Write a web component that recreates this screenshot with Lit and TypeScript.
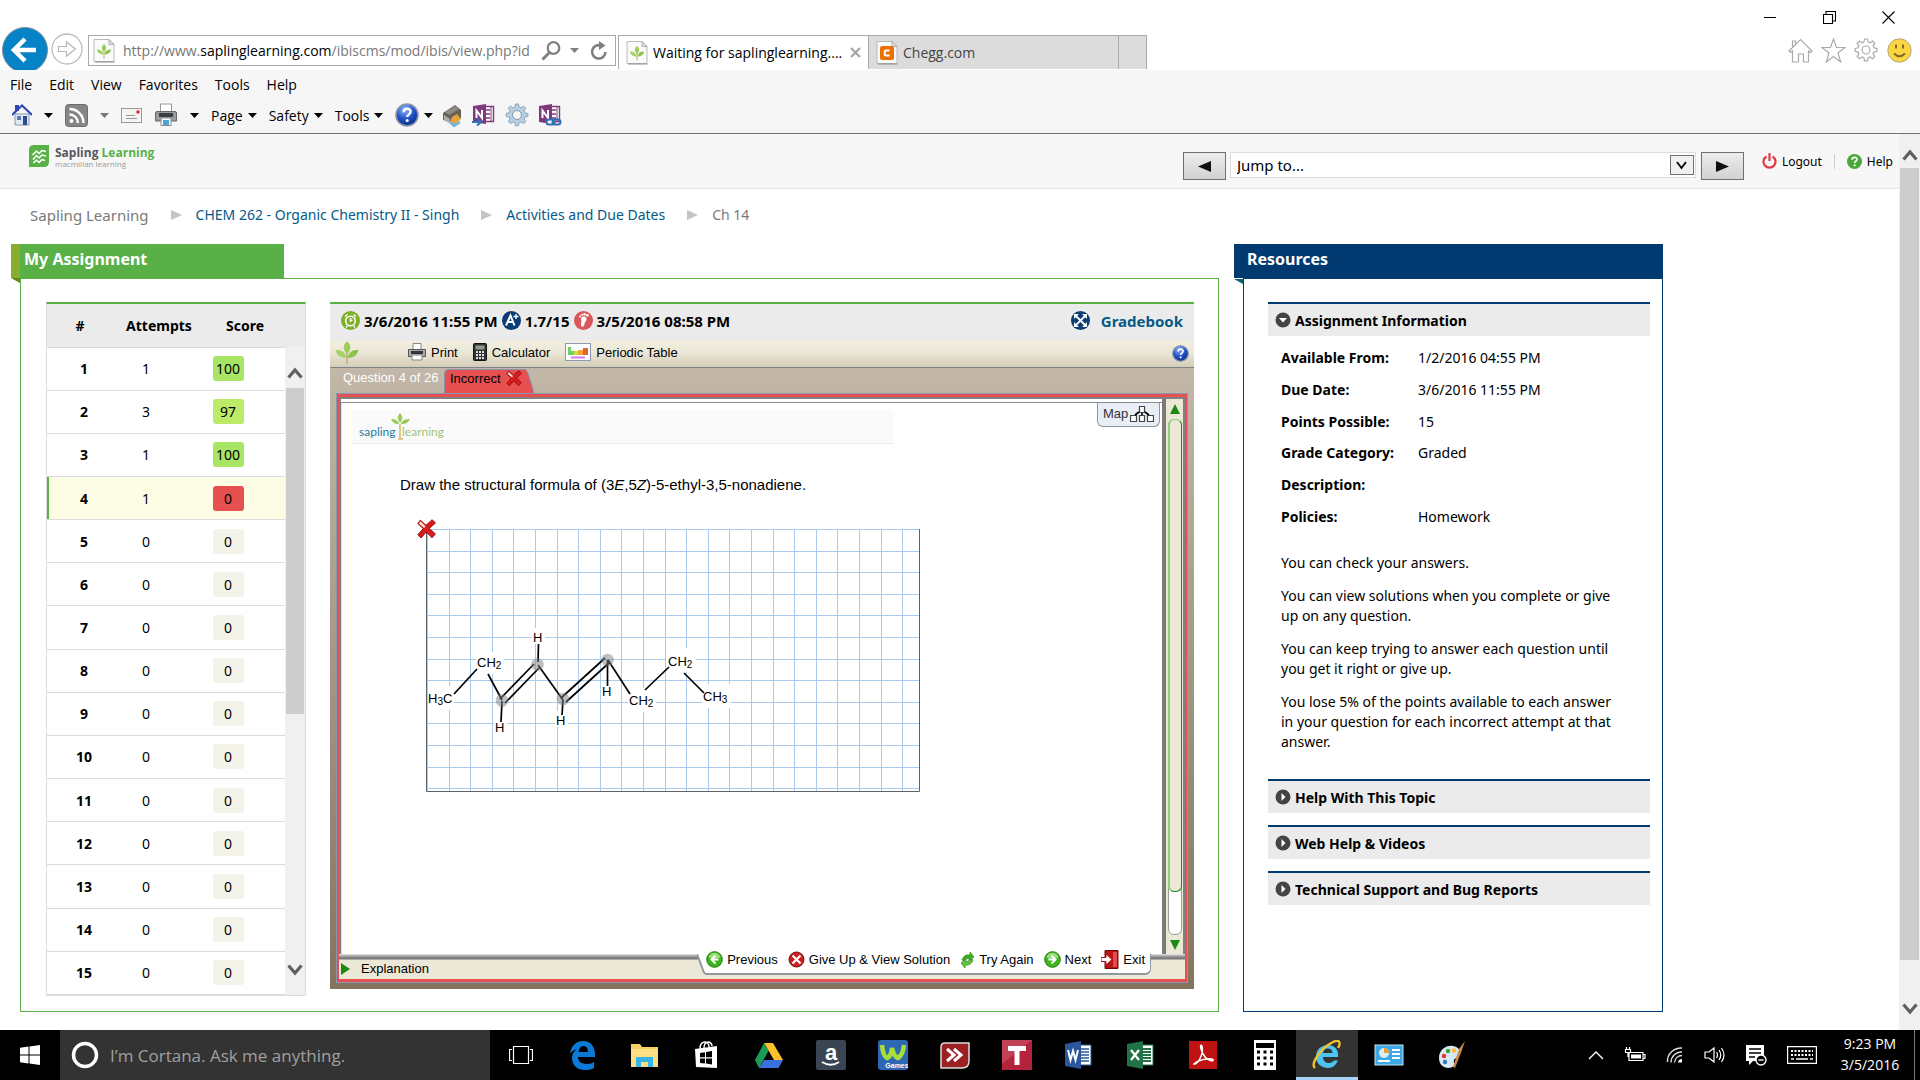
import { LitElement, html, css, svg } from "lit";
import { customElement } from "lit/decorators.js";
import { classMap } from "lit/directives/class-map.js";

interface Row { attempts: number; score: number; tone: string; }

const ROWS: Row[] = [
  { attempts: 1, score: 100, tone: "good" },
  { attempts: 3, score: 97, tone: "fair" },
  { attempts: 1, score: 100, tone: "good" },
  { attempts: 1, score: 0, tone: "bad" },
  ...Array.from({ length: 11 }, () => ({ attempts: 0, score: 0, tone: "none" })),
];

const INFO: [string, string][] = [
  ["Available From:", "1/2/2016 04:55 PM"],
  ["Due Date:", "3/6/2016 11:55 PM"],
  ["Points Possible:", "15"],
  ["Grade Category:", "Graded"],
  ["Description:", ""],
  ["Policies:", "Homework"],
];

const svgIcon = (w: number, h: number, body: unknown, box = `0 0 ${w} ${h}`) =>
  html`<svg class="ico" width=${w} height=${h} viewBox=${box} aria-hidden="true">${body}</svg>`;

const caret = (color = "#000") => svgIcon(9, 5, svg`<path d="M0 0h9l-4.5 5z" fill=${color} />`);

const leaf = svg`<path d="M12 21V9" stroke="#c9b478" stroke-width="1.4"/>
  <path d="M12 3c3.500 3 3.500 6.500 0 10c-3.500-3.500-3.500-7 0-10z" fill="#9bcc5b"/>
  <path d="M11.500 16c-5 .5-7.500-2-8.500-6c4.500-.5 7.500 1.500 8.500 6z" fill="#a6d267"/>
  <path d="M12.500 16c5 .5 7.500-2 8.500-6c-4.500-.5-7.500 1.500-8.500 6z" fill="#8ec24e"/>`;

const sheet = svg`<path d="M1 .5h15l5 5v17h-20z" fill="#fafafa" stroke="#b9b9b9"/>
  <path d="M16 .5v5h5z" fill="#e2e2e2" stroke="#a0a0a0" stroke-width=".8"/><path d="M2 23h19.500" stroke="#8d8d8d"/>`;

const favSapling = svgIcon(22, 24, svg`${sheet}<g transform="translate(1.400 2.600) scale(.8)">${leaf}</g>`);
const favChegg = svgIcon(22, 24, svg`${sheet}<rect x="4" y="5" width="14" height="14" rx="2" fill="#eb7100"/>
  <path d="M13.600 9.500h-3.600q-1.200 0-1.200 1.200v2.600q0 1.200 1.200 1.200h3.600" fill="none" stroke="#fff" stroke-width="2.200"/>`);

const redX = (s: number) => svgIcon(s, s, svg`
  <path d="M3 1l5 4.600L13.600.6L16.500 3.600L11 8.400l5.500 5L13.400 16.800L8.300 11.600L3.600 17L.8 14L5.600 8.600L.6 4z" fill="#d81b1b" stroke="#8d0c0c" stroke-width=".8"/>
  <path d="M3 2l4.600 4.400L6.400 8L1.600 4z" fill="#ffd9d5"/>`, "0 0 17 17");

const printer = svgIcon(24, 24, svg`
  <path d="M6.500 1h11v9h-11z" fill="#fff" stroke="#999"/>
  <path d="M1.500 10q0-1.500 1.500-1.500h18q1.500 0 1.500 1.500v8h-21z" fill="#9a9da0" stroke="#666"/>
  <path d="M5 10h14v4H5z" fill="#3c3f42"/>
  <path d="M7 15h10v7.500H7z" fill="#fff" stroke="#888"/><path d="M9 17h6v5H9z" fill="#4aa8d8"/>`);

const orb = (s: number, id: string) => svgIcon(s, s, svg`
  <defs><radialGradient id=${id} cx=".4" cy=".25" r=".9"><stop offset="0" stop-color="#8fb4ff"/><stop offset=".5" stop-color="#1d4fc4"/><stop offset="1" stop-color="#0a2173"/></radialGradient></defs>
  <circle cx="12" cy="12" r="11" fill="url(#${id})" stroke="#8c96a8" stroke-width="1.600"/>
  <path d="M8.600 9.200c0-4.600 7-4.600 7-.4c0 2.600-3.400 2.600-3.400 5.200" fill="none" stroke="#fff" stroke-width="2.400"/><circle cx="12.200" cy="17.400" r="1.500" fill="#fff"/>`, "0 0 24 24");

const oneNote = (extra: unknown) => svgIcon(24, 24, svg`
  <path d="M12 3.500h9.500v15H12z" fill="#fff" stroke="#80397b" stroke-width="1.400"/>
  <path d="M14 7h4M14 11h4M14 15h4" stroke="#80397b" stroke-width="1.600"/><path d="M19 4v14" stroke="#80397b"/>
  <path d="M1 3l13-2v20L1 19z" fill="#80397b"/><path d="M4.500 15V7.500l5.500 7.500V7" fill="none" stroke="#fff" stroke-width="2"/>${extra}`);

const gearPath = "M10.500 1h3l.6 3 2 .8 2.500-1.700 2.200 2.200-1.700 2.500.8 2 3 .6v3l-3 .6-.8 2 1.700 2.500-2.200 2.200-2.500-1.700-2 .8-.6 3h-3l-.6-3-2-.8-2.500 1.700-2.200-2.200 1.700-2.500-.8-2-3-.6v-3l3-.6.8-2-1.700-2.500 2.200-2.200 2.500 1.700 2-.8z";

const bullet = (open: boolean) => svgIcon(16, 16, svg`<circle cx="8" cy="8" r="7.500" fill="#444"/>
  ${open ? svg`<path d="M4 6h8l-4 4.500z" fill="#fff"/>` : svg`<path d="M6.500 4v8l4-4z" fill="#fff"/>`}`);

const chevUp = svgIcon(16, 14, svg`<path d="M1.500 11.500L8 4l6.500 7.500" fill="none" stroke="#606060" stroke-width="3.200"/>`);
const chevDown = svgIcon(16, 14, svg`<path d="M1.500 2.500L8 10l6.500-7.500" fill="none" stroke="#606060" stroke-width="3.200"/>`);

const greenBall = (back: boolean) => svgIcon(17, 17, svg`<circle cx="8.500" cy="8.500" r="7.800" fill="#3fb51d" stroke="#1f7d0b"/>
  <path d="M2.500 6.500a6.200 6.200 0 0 1 12 0q-6 2.500-12 0z" fill="#b9ef9c" opacity=".7"/>
  <path d=${back ? "M9.500 4.500l-4 4l4 4M5.500 8.500h7" : "M7.500 4.500l4 4l-4 4M11.500 8.500h-7"} fill="none" stroke="#fff" stroke-width="2"/>`);

@customElement("molecule-grid")
class MoleculeGrid extends LitElement {
  static styles = css`
    :host { display: block; }
    svg { display: block; }
    text { font: 13px "Liberation Sans", Arial, sans-serif; fill: #000; }
    .sub { font-size: 10px; }
  `;
  render() {
    const xs = Array.from({ length: 23 }, (_, i) => Math.round(17 + i * 21.6) + 0.5);
    const ys = Array.from({ length: 13 }, (_, i) => Math.round(19 + i * 21.6) + 0.5);
    const bonds: number[][] = [
      [44, 184, 67, 159], [78, 164, 92, 190], [92, 191, 91, 212],
      [90, 189, 124, 154], [95, 193, 129, 158], [128, 152, 128.5, 134],
      [128, 155, 153, 190], [153, 190, 152, 205],
      [151, 188, 195, 148], [156, 192, 200, 152],
      [197.500, 150, 197.500, 176], [198, 150, 220, 184],
      [235, 180, 259, 157], [274, 163, 294, 183],
    ];
    const halos = [[18, 176, 26, 24], [66, 142, 28, 22], [218, 178, 28, 24], [256, 138, 30, 24], [292, 174, 28, 24], [122, 118, 13, 16], [84, 208, 13, 16], [145, 201, 13, 16], [191, 173, 13, 16]];
    return html`<svg width="520" height="290" viewBox="0 0 520 290" role="img" aria-label="Structural formula">
      <path d=${xs.map((x) => `M${x} 19V281`).join("")} stroke="#a9cbee" />
      <path d=${ys.map((y) => `M17 ${y}H509`).join("")} stroke="#a9cbee" />
      <path d="M16.500 19V281.500H509.500V19" fill="none" stroke="#5d6468" />
      ${halos.map((h) => svg`<rect x=${h[0]} y=${h[1]} width=${h[2]} height=${h[3]} fill="#fff"/>`)}
      ${bonds.map((b) => svg`<line x1=${b[0]} y1=${b[1]} x2=${b[2]} y2=${b[3]} stroke="#000" stroke-width="1.700"/>`)}
      ${[[92, 190.500], [127.500, 154.500], [153, 189], [197.500, 150]].map((c) => svg`<circle cx=${c[0]} cy=${c[1]} r="6.300" fill="#808080" opacity=".5"/>`)}
      <text x="18" y="193">H<tspan class="sub" dy="2">3</tspan><tspan dy="-2">C</tspan></text>
      <text x="67" y="157">CH<tspan class="sub" dy="2">2</tspan></text>
      <text x="219" y="195">CH<tspan class="sub" dy="2">2</tspan></text>
      <text x="258" y="156">CH<tspan class="sub" dy="2">2</tspan></text>
      <text x="293" y="191">CH<tspan class="sub" dy="2">3</tspan></text>
      <text x="123" y="132">H</text><text x="85" y="222">H</text>
      <text x="146" y="215">H</text><text x="192" y="186">H</text>
      <svg x="7" y="9" width="19" height="19" viewBox="0 0 17 17">
        <path d="M3 1l5 4.600L13.600.6L16.500 3.600L11 8.400l5.500 5L13.400 16.800L8.300 11.600L3.600 17L.8 14L5.600 8.600L.6 4z" fill="#d81b1b" stroke="#8d0c0c" stroke-width=".8"/>
        <path d="M3 2l4.600 4.400L6.400 8L1.600 4z" fill="#ffe4e0"/>
      </svg>
    </svg>`;
  }
}

@customElement("task-bar")
class TaskBar extends LitElement {
  static styles = css`
    :host { display: flex; height: 50px; background: #000; color: #fff; font-family: "Open Sans", "Noto Sans", sans-serif; }
    button { border: 0; background: none; padding: 0; margin: 0; color: inherit; display: flex; align-items: center; justify-content: center; }
    svg { display: block; }
    .start { width: 60px; }
    .search { width: 430px; background: #333; display: flex; align-items: center; padding-left: 11px; gap: 11px; box-sizing: border-box; }
    .search input { flex: 1; min-width: 0; border: 0; background: none; font: 17px "Open Sans", sans-serif; color: #a0a0a0; padding: 0; }
    .search input::placeholder { color: #a0a0a0; opacity: 1; }
    .apps { display: flex; flex: 1; }
    .apps button { width: 62px; border-bottom: 3px solid transparent; border-top: 3px solid transparent; }
    .apps .active { background: #333; border-bottom-color: #a9d3fa; border-top-color: #333; }
    .tray { display: flex; align-items: center; gap: 20px; }
    .clock { font-size: 14px; line-height: 21px; text-align: center; width: 66px; padding-bottom: 2px; }
    .edge { width: 5px; border-left: 1px solid #777; align-self: stretch; margin-left: -9px; }
  `;
  render() {
    const apps = [
      ["Edge", svg`<path d="M2 14C3 5 9 1 15 1c8 0 12 6 12 14v2H10c0 5 4 7 9 7 3 0 5-.7 7-2v6c-2 1.400-5 2-9 2C8 30 4 24 4 18c0-4 2-7 5-9-4 1-6 3-7 5zM10.500 12h9.500c0-4-2-6-4.500-6s-4.500 2-5 6z" fill="#0a7ad6"/>`],
      ["File Explorer", svg`<path d="M1 4h9l2 3h16v20H1z" fill="#f5cf63"/><path d="M1 9h27v18H1z" fill="#fcdf83"/><path d="M6 17h17v10h-5v-5h-7v5H6z" fill="#35b5e8"/>`],
      ["Store", svg`<path d="M3 9l22-3v22L4 27z" fill="#fff"/><path d="M8 9c0-9 9-9 9-2M12 8c0-8 8-7 8-2" fill="none" stroke="#fff" stroke-width="1.500"/><path d="M8 13l5-.7v5H8zM14 12l6-.9v6.200h-6zM8 18.400h5v5L8 23zM14 18.400h6v6l-6-.8z" fill="#000"/>`],
      ["Google Drive", svg`<path d="M10 3h9l10 17h-9z" fill="#fbc02d"/><path d="M10 3l4.500 8L5 28 1 20z" fill="#1a9c55"/><path d="M10 20h19l-4.500 8H5z" fill="#3a6fe0"/>`],
      ["Amazon", svg`<rect x="0" y="0" width="30" height="30" rx="2" fill="#3a4553"/><text x="15" y="20" text-anchor="middle" fill="#fff" font-size="22" font-weight="700">a</text><path d="M6 22q9 5.500 17 0" fill="none" stroke="#fff" stroke-width="1.800"/>`],
      ["Games", svg`<rect x="0" y="0" width="30" height="30" rx="3" fill="#2d68b4"/><path d="M4 5q1 11 5 13q4-1 5-10q2 9 6 10q5-3 6-13" fill="none" stroke="#a9dd3a" stroke-width="4.500"/><text x="19" y="28" text-anchor="middle" fill="#fff" font-size="7" font-weight="700">Games</text>`],
      ["Remote", svg`<path d="M5 3h24v18q0 7-7 7H1V7q0-4 4-4z" fill="#9a2024" stroke="#ddd" stroke-width="1.500"/><path d="M7 9l7 6-7 6M14 9l7 6-7 6" fill="none" stroke="#fff" stroke-width="3"/>`],
      ["T", svg`<rect x="0" y="0" width="30" height="30" fill="#b3243c"/><path d="M0 0h30L0 24z" fill="#d06070" opacity=".5"/><path d="M6 6h18v5h-6.500v14h-5V11H6z" fill="#fff"/>`],
      ["Word", svg`<path d="M14 5h13v20H14z" fill="#fff" stroke="#2b579a"/><path d="M17 9h8M17 12h8M17 15h8M17 18h8M17 21h8" stroke="#2b579a" stroke-width="1.500"/><path d="M1 4l16-3v28L1 26z" fill="#2b579a"/><path d="M4 10l2.500 10L9 11l2.500 9L14 10" fill="none" stroke="#fff" stroke-width="2"/>`],
      ["Excel", svg`<path d="M14 5h13v20H14z" fill="#fff" stroke="#217346"/><path d="M17 9h8M17 12h8M17 15h8M17 18h8M17 21h8" stroke="#217346" stroke-width="2"/><path d="M1 4l16-3v28L1 26z" fill="#217346"/><path d="M5 10l8 10M13 10L5 20" fill="none" stroke="#fff" stroke-width="2.200"/>`],
      ["Acrobat", svg`<rect x="1" y="1" width="28" height="28" fill="#c11212"/><path d="M6 24c3 1 10-9 8-18c-1-2-2 0-1 3c2 7 6 11 11 12c3-1 0-3-5-2c-5 .5-10 2-13 5z" fill="none" stroke="#fff" stroke-width="1.500"/>`],
      ["Calculator", svg`<path d="M4 0h22v30H4z" fill="#fff"/><path d="M6 3h18v5H6z" fill="#000"/><path d="M7 12h3M13.500 12h3M20 12h3M7 18h3M13.500 18h3M20 18h3M7 24h3M13.500 24h3M20 24h3" stroke="#000" stroke-width="3"/>`],
      ["Internet Explorer", svg`<path d="M26 17H11c0 4 3 6 6 6 2 0 4-1 5-2.500h4C24 25 21 28 16 28 9 28 4 23 4 16.500S9 5 16 5s11 5 10 12zM11 13h9.500c0-3-2-4.500-4.700-4.500S11.500 10 11 13z" fill="#4cc3f1"/><path d="M3 28C-2 24 9 8 21 2c7-3 8 1 5 6" fill="none" stroke="#f2c12e" stroke-width="2.400"/>`],
      ["Control Panel", svg`<rect x="1" y="5" width="28" height="20" fill="#3fa9e6" stroke="#bfe3f8"/><circle cx="10" cy="13" r="5" fill="#d8effb"/><path d="M10 13V8a5 5 0 0 1 5 5z" fill="#f59b2e"/><path d="M18 10h8M18 14h8M18 18h8M4 21h12" stroke="#fff" stroke-width="1.800"/>`],
      ["Paint", svg`<path d="M3 18C3 10 10 5 17 6c6 1 8 5 6 9-1 3-4 3-5 5-1 3 2 4 0 6-5 4-15 2-15-8z" fill="#d7e7f3"/><circle cx="8" cy="16" r="2.200" fill="#e33"/><circle cx="12" cy="11" r="2.200" fill="#3a3"/><circle cx="18" cy="10.500" r="2.200" fill="#fb3"/><circle cx="9" cy="22" r="2.200" fill="#37c"/><path d="M29 1l-3 9-7 18-2-1 6-18z" fill="#c98a45"/>`],
    ] as const;
    return html`
      <button class="start" aria-label="Start"><svg width="20" height="20" viewBox="0 0 20 20"><path d="M0 2.800l8.500-1.200v8H0zM9.500 1.400L20 0v9.600H9.500zM0 10.500h8.500v8L0 17.300zM9.500 10.500H20V20L9.500 18.600z" fill="#fff"/></svg></button>
      <label class="search"><svg width="28" height="28" viewBox="0 0 28 28" aria-hidden="true"><circle cx="14" cy="14" r="11.500" fill="none" stroke="#fff" stroke-width="3.500"/></svg>
        <input aria-label="Cortana search" placeholder="I’m Cortana. Ask me anything." /></label>
      <div class="apps">
        <button class="view" aria-label="Task view"><svg width="24" height="20" viewBox="0 0 24 20"><path d="M4.500 1.500h15v17h-15zM3 4.500H.5v11H3M21 4.500h2.500v11H21" fill="none" stroke="#fff" stroke-width="1.200"/></svg></button>
        ${apps.map(([name, art]) => html`<button aria-label=${name} class=${classMap({ active: name === "Internet Explorer" })}><svg width="30" height="30" viewBox="0 0 30 30">${art}</svg></button>`)}
      </div>
      <div class="tray">
        <svg width="16" height="10" viewBox="0 0 16 10"><path d="M1 9l7-7 7 7" fill="none" stroke="#fff" stroke-width="1.400"/></svg>
        <svg width="22" height="18" viewBox="0 0 22 18"><path d="M5 6.500h14v8H5zM19 8.500h2v4h-2M2.500 1v3M5.500 1v3M1.500 3.500h5v3h-5zM4 6v5" fill="none" stroke="#fff" stroke-width="1.200"/><path d="M7 8.500h10v4H7z" fill="#fff"/></svg>
        <svg width="18" height="18" viewBox="0 0 18 18"><path d="M1.500 16C1 8 8 1.500 16 2M5 16.500C5 10.500 10 5.500 16 6M8.500 16.500C9 12.500 12 9.500 16 9.500" fill="none" stroke="#ddd" stroke-width="1.400"/><path d="M12 16.500q.5-3.500 4-3.500v3.500z" fill="#fff"/></svg>
        <svg width="21" height="18" viewBox="0 0 21 18"><path d="M1 6h4l5-4v14l-5-4H1z" fill="none" stroke="#fff" stroke-width="1.200"/><path d="M12.500 6q2 3 0 6M15 4q3.500 5 0 10M17.500 2q5 7 0 14" fill="none" stroke="#fff" stroke-width="1.200"/></svg>
        <svg width="22" height="22" viewBox="0 0 22 22"><path d="M1 1h18v16H8l-4 4v-4H1z" fill="#fff"/><path d="M4 5h12M4 9h12M4 13h6" stroke="#000" stroke-width="1.500"/><circle cx="16" cy="16" r="5" fill="#000" stroke="#fff" stroke-width="1.400"/><path d="M13.500 16h5" stroke="#fff" stroke-width="1.400"/></svg>
        <svg width="30" height="18" viewBox="0 0 30 18"><path d="M.6.600h28.800v16.800H.6z" fill="none" stroke="#fff" stroke-width="1.200"/><path d="M4 5h22M4 9h22" stroke="#fff" stroke-width="2" stroke-dasharray="2 1.500"/><path d="M4 13h3M9 13h12M23 13h3" stroke="#fff" stroke-width="1.600"/></svg>
        <div class="clock">9:23 PM<br />3/5/2016</div>
        <div class="edge"></div>
      </div>`;
  }
}

@customElement("app-root")
class AppRoot extends LitElement {
  static styles = css`
    :host { display: flex; flex-direction: column; min-height: 100vh; background: #fff; color: #000; font: 14px "Noto Sans", "Open Sans", sans-serif; }
    * { box-sizing: border-box; }
    button { font: inherit; color: inherit; background: none; border: 0; padding: 0; margin: 0; }
    a { color: inherit; text-decoration: none; }
    .ico { display: block; flex: none; }

    .chrome { font-family: "Open Sans", "Noto Sans", sans-serif; font-size: 14px; }
    .top { display: flex; height: 70px; padding: 0 8px 0 2px; overflow: hidden; }
    .nav { display: flex; align-items: flex-start; }
    .back { margin-top: 27px; height: 46px; }
    .fwd { margin: 33px 4px 0 3px; }
    .address { width: 528px; height: 31px; margin: 35px 2px 0 1px; border: 1px solid #aaa; display: flex; align-items: center; padding: 0 7px 0 4px; }
    .url { flex: 1; white-space: nowrap; margin: 0 6px 0 8px; color: #777; }
    .url b { font-weight: 400; color: #000; }
    .address .caret { margin: 0 11px 0 9px; }
    .tabs { display: flex; margin-top: 35px; height: 34px; border: 1px solid #aaa; border-bottom: 0; }
    .tab { width: 250px; display: flex; align-items: center; gap: 5px; padding: 0 7px; border-right: 1px solid #aaa; white-space: nowrap; }
    .tab .lbl { flex: 1; }
    .tab.off, .newtab { background: #dcdcdc; color: #444; }
    .newtab { width: 27px; }
    .win { margin-left: auto; display: flex; flex-direction: column; align-items: flex-end; }
    .winbtns { display: flex; gap: 46px; padding: 11px 17px 0 0; height: 38px; align-items: flex-start; }
    .tools { display: flex; gap: 8px; }
    .bars { background: #f6f6f6; height: 64px; border-bottom: 1px solid #747474; }
    .menu { display: flex; gap: 17px; padding: 0 10px; height: 28px; align-items: center; }
    .cmd { display: flex; align-items: center; padding: 0 12px; height: 34px; gap: 12px; }
    .cmd .drop { display: flex; align-items: center; gap: 5px; }
    .cmd .extras { display: flex; align-items: center; gap: 9px; }

    .body { flex: 1; display: flex; }
    .page { flex: 1; min-width: 0; display: flex; flex-direction: column; }
    .scroll { width: 21px; background: #f0f0f0; display: flex; flex-direction: column; align-items: center; flex: none; }
    .scroll .thumb { background: #cdcdcd; align-self: stretch; margin: 0 1px; }
    .page-scroll { padding: 14px 0; gap: 6px; }
    .page-scroll .thumb { flex: 1; margin-bottom: 36px; }

    .head { background: #f7f7f7; height: 55px; border-bottom: 1px solid #e3e3e3; display: flex; justify-content: space-between; padding: 11px 6px 0 29px; }
    .brand { display: flex; gap: 6px; height: 24px; }
    .brand .word { font: 700 12px/15px "Open Sans", sans-serif; color: #57585a; }
    .brand em { font-style: normal; color: #57b147; }
    .brand small { display: block; font: 8px/8px "Open Sans", sans-serif; color: #999; }
    .jump { display: flex; align-items: flex-start; padding-top: 7px; }
    .step { width: 43px; height: 28px; border: 1px solid #707070; background: linear-gradient(#ececec, #d2d2d2); display: flex; align-items: center; justify-content: center; }
    .pick { position: relative; width: 466px; margin: 0 5px 0 4px; }
    .pick select { appearance: none; width: 100%; height: 26px; border: 1px solid #ddd; border-radius: 0; background: #fff; font: 15px "Noto Sans", sans-serif; padding: 0 6px; color: #000; }
    .pick .arrow { position: absolute; right: 2px; top: 3px; width: 24px; height: 20px; border: 1px solid #707070; background: #f0f0f0; display: flex; align-items: center; justify-content: center; pointer-events: none; }
    .links { display: flex; align-items: center; height: 18px; margin-left: 18px; gap: 6px; font-size: 12px; }
    .links a { display: flex; align-items: center; gap: 5px; }
    .bar { width: 1px; height: 15px; background: #ccc; margin: 0 6px; }

    .crumbs { display: flex; align-items: center; height: 55px; padding: 0 30px 4px; gap: 14px; color: #7a7a7a; }
    .crumbs a { color: #045a87; margin-right: 8px; }
    .crumbs .home { font-size: 15px; color: #7a7a7a; }

    .cols { flex: 1; display: grid; grid-template-columns: minmax(0, 1fr) 429px; column-gap: 15px; padding: 0 236px 18px 11px; }
    .panel { display: flex; flex-direction: column; }
    .title { margin: 0; height: 34px; font-size: 16px; font-weight: 700; line-height: 30px; color: #fff; }
    .mine .title { width: 273px; background: #58b047; border-left: 9px solid #89ae2f; padding-left: 4px; }
    .res .title { background: #003a70; padding-left: 13px; }
    .box { flex: 1; position: relative; margin-left: 9px; border: 1px solid #58b047; }
    .res .box { border-color: #003a70; }
    .mine .box { border-top: 0; box-shadow: inset 0 1px #58b047; }
    .fold { position: absolute; left: -10px; top: 0; width: 9px; height: 5px; background: #64861c; clip-path: polygon(0 0, 100% 0, 100% 100%); }
    .res .fold { background: #0a6272; }
    .mine .box { display: flex; gap: 24px; padding: 24px 24px 15px 25px; align-items: flex-start; }

    .list { width: 260px; flex: none; display: flex; border: 1px solid #dcdcdc; border-top: 2px solid #58b047; background: #ebebeb; align-self: stretch; }
    table { border-collapse: collapse; border-spacing: 0; }
    .grades { width: 238px; table-layout: fixed; background: #fff; height: 691px; }
    .grades th, .grades td { padding: 0; text-align: center; border-bottom: 1px solid #dcdcdc; }
    .grades thead th { background: #ebebeb; height: 43px; }
    .c1 { width: 66px; } .c2 { width: 92px; }
    .grades tbody th { padding-left: 8px; }
    .grades .att { padding-right: 26px; }
    .grades .sc { padding-right: 34px; }
    .badge { display: block; width: 31px; height: 25px; line-height: 25px; margin: 0 auto; border-radius: 3px; background: #f3f3ea; }
    .badge.good { background: #a9e565; } .badge.fair { background: #bcea69; } .badge.bad { background: #e65050; }
    .grades .current { background: #fdfce5; box-shadow: inset 2px 0 #58b047; }
    .list .scroll { width: 20px; flex: 1; margin-top: 43px; padding: 19px 0 18px; gap: 8px; }
    .list .thumb { height: 326px; margin-bottom: auto; }

    .module { flex: 1; min-width: 0; display: flex; flex-direction: column; border-top: 2px solid #58b047; align-self: stretch; margin-bottom: 7px; font-family: "Liberation Sans", Arial, sans-serif; font-size: 13px; }
    .status { height: 37px; background: #ebebeb; display: flex; align-items: center; gap: 4px; padding: 0 11px 4px; font: 700 15px "Noto Sans", sans-serif; }
    .status .right { margin-left: auto; display: flex; gap: 11px; align-items: center; color: #045a87; }
    .kit { height: 27px; background: linear-gradient(#f2efe0, #ebe7d6 45%, #d3cdb8); border-bottom: 1px solid #7c8488; display: flex; align-items: center; padding: 0 5px 4px 4px; }
    .kit button { display: flex; align-items: center; gap: 5px; margin-right: 15px; }
    .kit .first { margin-left: 48px; }
    .kit .ask { margin: 2px 0 0 auto; }
    .stage { flex: 1; display: flex; flex-direction: column; padding: 1px 6px 6px; background: linear-gradient(#c2b7a8, #84745f); }
    .qtabs { display: flex; height: 24px; align-items: stretch; }
    .count { color: #fff; line-height: 18px; padding-left: 7px; width: 108px; white-space: nowrap; }
    .wrong { display: flex; gap: 5px; height: 24px; padding: 1px 0 0 6px; background: #e65050; border-radius: 5px 0 0; line-height: 18px; width: 80px; box-shadow: inset 1px 1px #8a93b0; }
    .frame { flex: 1; display: flex; flex-direction: column; border: 1px solid #8498b4; background: #e65050; padding: 3px 2px; }
    .view { flex: 1; display: flex; border: 2px solid #818181; border-bottom: 0; background: #fff; }
    .work { flex: 1; min-width: 0; margin-top: 3px; border-top: 1px solid #868c90; box-shadow: inset 1px 0 #ddd; position: relative; }
    .map { position: absolute; right: 2px; top: 0; width: 63px; height: 24px; border: 1px solid #8d979e; border-top: 0; border-radius: 0 0 6px 6px; background: #e9edf6; display: flex; gap: 2px; padding: 0 0 2px 5px; align-items: center; color: #333; }
    .banner { width: 541px; height: 34px; background: #fafafa; border-bottom: 1px solid #ececec; margin: 7px 0 0 11px; }
    .prompt { font-size: 15px; line-height: 20px; margin: 31px 0 15px 59px; }
    molecule-grid { margin-left: 69px; }
    .rail { width: 21px; display: flex; flex-direction: column; align-items: center; background: #ebe8d8; border-left: 4px solid #7b7b7b; padding: 5px 0 4px; gap: 5px; }
    .tube { flex: 1; width: 14px; border: 1px solid #99a09a; border-radius: 6px; background: #fff; }
    .tube .grip { height: 92%; margin: -1px; border: 1px solid #1c8a12; border-left: 2px solid #8fd07c; border-top-color: #8fd07c; border-radius: 6px; background: #ebe8d8; }
    .foot { display: flex; align-items: flex-start; justify-content: space-between; height: 25px; background: linear-gradient(#e8e8e8, #8a8a8a 3px, #747474 5px, #ebe8d8 6px); }
    .explain { display: flex; align-items: center; gap: 10px; padding: 5px 0 0 2px; height: 24px; }
    .actions { display: flex; margin-right: 34px; }
    .slant { margin-right: -9px; }
    .acts { display: flex; align-items: center; gap: 10px; height: 21px; background: #fff; border-bottom: 2px solid #8f999d; border-right: 1px solid #8f999d; border-radius: 0 0 6px 0; padding: 0 5px 8px 0; }
    .acts button { display: flex; align-items: center; gap: 4px; white-space: nowrap; }

    .res .box { padding: 23px 12px 0 24px; }
    .acc { width: 100%; height: 34px; border-top: 2px solid #003a70; background: #ebebeb; display: flex; align-items: center; gap: 4px; padding: 0 7px; font-weight: 700; margin-bottom: 12px; }
    .info { margin: -6px 0 0 13px; height: 190px; }
    .info th { text-align: left; width: 137px; padding: 0; }
    .info td { padding: 0; }
    .policy { margin: 21px 28px 27px 13px; line-height: 20px; }
    .policy p { margin: 0 0 13px; }
  `;

  private accordion(text: string, open = false) {
    return html`<button class="acc" aria-expanded=${open}>${bullet(open)}<span>${text}</span></button>`;
  }

  private chrome() {
    const grey = "#808080";
    const menuBtn = (t: string) => html`<button class="drop">${t}${caret()}</button>`;
    return html`<header class="chrome">
      <div class="top">
        <div class="nav">
          <button class="back" aria-label="Back">${svgIcon(46, 46, svg`<circle cx="23" cy="23" r="22.500" fill="#0683c6" stroke="#7d8d96"/><path d="M23 12L12 23l11 11M12.500 23H34" fill="none" stroke="#fff" stroke-width="4.500"/>`)}</button>
          <button class="fwd" aria-label="Forward">${svgIcon(32, 32, svg`<circle cx="16" cy="16" r="15" fill="#fff" stroke="#bbb" stroke-width="1.300"/><path d="M7.500 13.500h8V9l9 7-9 7v-4.500h-8z" fill="#fff" stroke="#b5b5b5" stroke-width="1.200"/>`)}</button>
          <div class="address">${favSapling}
            <span class="url">http://www.<b>saplinglearning.com</b>/ibiscms/mod/ibis/view.php?id</span>
            ${svgIcon(20, 20, svg`<circle cx="12.500" cy="7" r="5.800" fill="none" stroke=${grey} stroke-width="2.200"/><path d="M8.500 11.500L1.500 18.500" stroke=${grey} stroke-width="3"/>`)}
            <span class="caret">${caret(grey)}</span>
            ${svgIcon(18, 20, svg`<path d="M11 4.500A6.700 6.700 0 1 0 15.500 11" fill="none" stroke=${grey} stroke-width="2.600"/><path d="M9 0l6.500 4.500L9 9z" fill=${grey}/>`)}
          </div>
        </div>
        <div class="tabs">
          <div class="tab">${favSapling}<span class="lbl">Waiting for saplinglearning....</span>${svgIcon(11, 11, svg`<path d="M1 1l9 9M10 1l-9 9" stroke="#a5a5a5" stroke-width="2.200"/>`)}</div>
          <div class="tab off">${favChegg}<span class="lbl">Chegg.com</span></div>
          <div class="newtab"></div>
        </div>
        <div class="win">
          <div class="winbtns">
            <button aria-label="Minimize">${svgIcon(13, 13, svg`<path d="M0 6.500h12" stroke="#000"/>`)}</button>
            <button aria-label="Restore">${svgIcon(13, 13, svg`<path d="M.5 3.500h9v9h-9zM3 3.500v-3h9.500v9.500h-3" fill="none" stroke="#000" stroke-width="1.100"/>`)}</button>
            <button aria-label="Close">${svgIcon(13, 13, svg`<path d="M.5.500l12 12M12.500.500l-12 12" stroke="#000" stroke-width="1.100"/>`)}</button>
          </div>
          <div class="tools">
            ${svgIcon(25, 25, svg`<path d="M1 13L12.500 1.500L24 13l-1.500 1.500-2-1.500v11h-5v-8h-5v8h-6V13l-2 1.500zM4.500 9V3h3v3.500" fill="#fff" stroke="#aaa" stroke-width="1.200"/>`)}
            ${svgIcon(25, 25, svg`<path d="M12.500 1l3 8.500h8.500l-7 5.500 2.700 9-7.200-5.500L5.300 24 8 15 1 9.500h8.500z" fill="#fff" stroke="#aaa" stroke-width="1.200"/>`)}
            ${svgIcon(25, 25, svg`<path d=${gearPath} fill="#fff" stroke="#aaa" stroke-width="1.200"/><circle cx="12" cy="12" r="4" fill="#fff" stroke="#aaa" stroke-width="1.200"/>`)}
            ${svgIcon(25, 25, svg`<circle cx="12.500" cy="12.500" r="11.700" fill="#fcd640" stroke="#b5a77a"/><path d="M9 6.500v4M16 6.500v4" stroke="#7c6a2a" stroke-width="2"/><path d="M7 15.500q5.500 5.500 11 0" fill="none" stroke="#7c6a2a" stroke-width="1.800"/>`)}
          </div>
        </div>
      </div>
      <div class="bars">
        <nav class="menu">${["File", "Edit", "View", "Favorites", "Tools", "Help"].map((m) => html`<button>${m}</button>`)}</nav>
        <div class="cmd">
          ${svgIcon(20, 22, svg`<path d="M3 1h4v6H3z" fill="#3145b5"/><path d="M3 10h14v11H3z" fill="#dfe9f5" stroke="#8a96ad"/><path d="M0 11L10 1.500L20 11" fill="none" stroke="#3145b5" stroke-width="2"/><path d="M5 12h4v4H5z" fill="#5b78b8"/><path d="M11 12h4v9h-4z" fill="#2b4b8c"/>`)}
          ${caret()}
          ${svgIcon(23, 23, svg`<rect x=".5" y=".5" width="22" height="22" rx="3" fill="#868686" stroke="#6c6c6c"/><circle cx="6.500" cy="17" r="2" fill="#fff"/><path d="M4.500 10.500a8.500 8.500 0 0 1 8.500 8.500M4.500 5a14 14 0 0 1 14 14" fill="none" stroke="#fff" stroke-width="2.400"/>`)}
          ${caret("#777")}
          ${svgIcon(21, 15, svg`<rect x=".5" y=".5" width="20" height="14" fill="#f4f4f4" stroke="#999"/><path d="M5 7.500h9M5 10.500h11" stroke="#999"/><rect x="15.500" y="2.500" width="3" height="3" fill="#d22"/>`)}
          ${printer}${caret()}
          ${menuBtn("Page")}${menuBtn("Safety")}${menuBtn("Tools")}
          <div class="extras">
            <button class="drop" aria-label="Help">${orb(24, "orbA")}${caret()}</button>
            ${svgIcon(21, 23, svg`<path d="M1 9L13 1l6 5v8l-9 4-9-2z" fill="#66615a"/><path d="M3 8l10-6 4 3-10 6z" fill="#8f8a82"/><path d="M2 11l6 4-1 4-5-3z" fill="#b0aca4"/><path d="M10 13l5-3 4 5-6 6-5-3z" fill="#e8a23a"/><path d="M8 18l4 4 6-4" fill="none" stroke="#6bb7e8" stroke-width="2.500"/>`)}
            ${oneNote(svg`<path d="M0 19h8M5 15.500l4 3.500-4 3.500" fill="none" stroke="#2f6fb5" stroke-width="2.200"/>`)}
            ${svgIcon(24, 24, svg`<path d=${gearPath} fill="#b9cee0" stroke="#7d98b2" stroke-width=".8"/><circle cx="12" cy="12" r="4.500" fill="#f6f6f6" stroke="#7d98b2"/>`)}
            ${oneNote(svg`<rect x="8.500" y="16.500" width="8" height="5" rx="2.500" fill="#f6f6f6" stroke="#2f6fb5" stroke-width="2"/><rect x="14.500" y="16.500" width="8" height="5" rx="2.500" fill="none" stroke="#2f6fb5" stroke-width="2"/>`)}
          </div>
        </div>
      </div>
    </header>`;
  }

  private module() {
    return html`<section class="module">
      <div class="status">
        ${svgIcon(19, 19, svg`<circle cx="9.500" cy="9.500" r="9.500" fill="#7fae27"/><circle cx="9.500" cy="10" r="4.800" fill="none" stroke="#fff" stroke-width="1.600"/><path d="M9.500 7v3l2-1M4 5.500l2.500-2M15 5.500l-2.500-2M6 15l-1 1.500M13 15l1 1.500" stroke="#fff" stroke-width="1.400" fill="none"/>`)}
        <span>3/6/2016 11:55 PM</span>
        ${svgIcon(19, 19, svg`<circle cx="9.500" cy="9.500" r="9.500" fill="#0b3c74"/><path d="M4 14.500L8.500 4.500L12.500 14.500M5.500 11h6" stroke="#fff" stroke-width="2" fill="none"/><path d="M14 3v5M11.500 5.500h5" stroke="#fff" stroke-width="1.400"/>`)}
        <span>1.7/15</span>
        ${svgIcon(19, 19, svg`<circle cx="9.500" cy="9.500" r="9.500" fill="#d9565a"/><path d="M7 7c3-3 6-1 5.500 2c-.5 2-2 2-2 4c0 3-3 4-3.500 1c-.4-2 1-3 0-7z" fill="#fff"/><g fill="#fff"><circle cx="6" cy="5.500" r="1"/><circle cx="8" cy="3.800" r="1"/><circle cx="10.500" cy="3.200" r="1.200"/><circle cx="13.300" cy="4.300" r="1.400"/></g>`)}
        <span>3/5/2016 08:58 PM</span>
        <a class="right" href="#gradebook">${svgIcon(19, 19, svg`<circle cx="9.500" cy="9.500" r="9.500" fill="#0b3c74"/><path d="M4 4l11 11M15 4L4 15" stroke="#fff" stroke-width="1.800"/><path d="M3 3h5L3 8zM16 3v5l-5-5zM3 16v-5l5 5zM16 16h-5l5-5z" fill="#fff"/>`)}Gradebook</a>
      </div>
      <div class="kit">
        ${svgIcon(26, 24, leaf, "3 2 18 19")}
        <button class="first">${svgIcon(18, 18, svg`<path d="M5 .5h8v7H5z" fill="#fff" stroke="#888"/><path d="M.5 6.500h17v7H.5z" fill="#a8adb0" stroke="#555"/><path d="M3 8h12v3H3z" fill="#333"/><path d="M4 12h10v5H4z" fill="#fff" stroke="#888"/>`)}Print</button>
        <button>${svgIcon(14, 18, svg`<rect x=".5" y=".5" width="13" height="17" rx="1" fill="#333" stroke="#111"/><path d="M2.500 2.500h9v4h-9z" fill="#8fa08a"/><path d="M3 9h8M3 12h8M3 15h8" stroke="#ddd" stroke-width="2" stroke-dasharray="2 1"/>`)}Calculator</button>
        <button>${svgIcon(26, 18, svg`<rect x=".5" y=".5" width="25" height="17" fill="#fff" stroke="#8c9bb5"/><path d="M3 4h3v4h3v4H3z" fill="#6fd06a"/><path d="M9 8h4v4H9z" fill="#c6e23a"/><path d="M13 7h5v5h-5z" fill="#f7a531"/><path d="M18 5h5v7h-5z" fill="#e8622c"/><path d="M6 13.500h14v2H6z" fill="#d07be0"/>`)}Periodic Table</button>
        <button class="ask" aria-label="Help">${orb(17, "orbB")}</button>
      </div>
      <div class="stage">
        <div class="qtabs"><span class="count">Question 4 of 26</span><span class="wrong">Incorrect ${redX(16)}</span>${svgIcon(11, 24, svg`<path d="M0 0q3 0 4 4l6 20H0z" fill="#e65050"/><path d="M0 .5q3 0 4 4L10 24" fill="none" stroke="#8a93b0"/>`)}</div>
        <div class="frame">
          <div class="view">
            <div class="work">
              <button class="map">Map ${svgIcon(24, 18, svg`<path d="M9.500 1.500h5v6h-5zM.5 10.500h6v6h-6zM9.500 10.500h5v6h-5zM17.500 10.500h6v6h-6z" fill="#fff" stroke="#444" stroke-width="1.200"/><path d="M9 7l-4 3M15 7l4 3M12 8v2" stroke="#000" stroke-width="1.600"/>`)}</button>
              <div class="banner"><svg width="110" height="34" viewBox="0 0 110 34" role="img" aria-label="sapling learning">
                <path d="M48 14v14M46 29h5" stroke="#d2b867" stroke-width="1.500"/>
                <path d="M48 3c3 3 3 6 0 10c-3-4-3-7 0-10z" fill="#9bcc5b"/><path d="M47 14c-4 .5-6-1-8-5c4 0 7 1 8 5zM49 14c4 .5 7-1 9-5c-4 0-8 1-9 5z" fill="#96c957"/>
                <text x="7" y="26" font-family="Lato, sans-serif" font-size="12" fill="#1f7ba0">sapling</text>
                <text x="50" y="26" font-family="Lato, sans-serif" font-size="12" fill="#a3bf7d">learning</text></svg></div>
              <p class="prompt">Draw the structural formula of (3<i>E</i>,5<i>Z</i>)-5-ethyl-3,5-nonadiene.</p>
              <molecule-grid></molecule-grid>
            </div>
            <div class="rail">
              ${svgIcon(10, 10, svg`<path d="M0 10h10L5 0z" fill="#1c8a12"/>`)}
              <div class="tube"><div class="grip"></div></div>
              ${svgIcon(10, 10, svg`<path d="M0 0h10L5 10z" fill="#1c8a12"/>`)}
            </div>
          </div>
          <div class="foot">
            <button class="explain">${svgIcon(10, 12, svg`<path d="M0 0l9 6-9 6z" fill="#1c8a12"/>`)}Explanation</button>
            <div class="actions">
              <span class="slant">${svgIcon(18, 21, svg`<path d="M0 0h18v21h-8q-3 0-4-4z" fill="#fff"/><path d="M0 0l6 16q1 4 4 4h8" fill="none" stroke="#8f999d" stroke-width="2"/>`)}</span>
              <div class="acts">
              <button>${greenBall(true)}Previous</button>
              <button>${svgIcon(17, 17, svg`<circle cx="8.500" cy="8.500" r="7.500" fill="#c92020" stroke="#7d0c0c"/><path d="M4.500 4.500l8 8M12.500 4.500l-8 8" stroke="#fff" stroke-width="2.200"/>`)}Give Up &amp; View Solution</button>
              <button>${svgIcon(15, 18, svg`<path d="M2 9q2-6 8-5V1l4 5-5 4V7.500Q6 7 4 10z" fill="#3fae1e" stroke="#247a0c" stroke-width=".6"/><path d="M13 9q-2 6-8 5v3l-4-5 5-4v2.500Q9 11 11 8z" fill="#62c83a" stroke="#247a0c" stroke-width=".6"/>`)}Try Again</button>
              <button>${greenBall(false)}Next</button>
              <button>${svgIcon(18, 19, svg`<path d="M4 .5h13v18H4z" fill="#b81414" stroke="#6d0808"/><path d="M12 2h4v15h-4z" fill="#e34b4b"/><path d="M0 7.500h5V4l6 5.500-6 5.500v-3.500H0z" fill="#fff" stroke="#b81414"/>`)}Exit</button>
              </div>
            </div>
          </div>
        </div>
      </div>
    </section>`;
  }

  render() {
    const arrow = svgIcon(11, 12, svg`<path d="M0 1v10l11-5z" fill="#c4c4c4"/>`);
    return html`
      ${this.chrome()}
      <div class="body">
        <div class="page">
          <header class="head">
            <div class="brand">
              ${svgIcon(20, 22, svg`<path d="M5 0h15v17q0 5-5 5H0V5q0-5 5-5z" fill="#57b147"/><path d="M3.500 10l4-4l2.500 2.500l3-3l4 1M4 14.500l3.500-4l2.500 2.500l3-3l4 1M4.500 18l3-3l2.500 2.500l3-3l3 1" fill="none" stroke="#fff" stroke-width="1.600" stroke-linejoin="round"/>`)}
              <div class="word">Sapling <em>Learning</em><small>macmillan learning</small></div>
            </div>
            <div class="jump">
              <button class="step" aria-label="Previous activity">${svgIcon(13, 11, svg`<path d="M13 0v11L0 5.500z" fill="#111"/>`)}</button>
              <div class="pick"><select aria-label="Jump to"><option>Jump to...</option></select>
                <span class="arrow">${svgIcon(11, 9, svg`<path d="M1 1l4.500 6L10 1" fill="none" stroke="#000" stroke-width="1.800"/>`)}</span></div>
              <button class="step" aria-label="Next activity">${svgIcon(13, 11, svg`<path d="M0 0v11l13-5.500z" fill="#111"/>`)}</button>
              <div class="links">
                <a href="#logout">${svgIcon(15, 16, svg`<path d="M4.500 3.500a6 6 0 1 0 6 0" fill="none" stroke="#e0394a" stroke-width="2.200"/><path d="M7.500 0v8" stroke="#e0394a" stroke-width="2.200"/>`)}Logout</a>
                <span class="bar"></span>
                <a href="#help">${svgIcon(15, 15, svg`<circle cx="7.500" cy="7.500" r="7.500" fill="#4aa83a"/><path d="M5 5.800c0-3.300 5-3.300 5-.3c0 1.800-2.400 1.800-2.400 3.500" fill="none" stroke="#fff" stroke-width="1.700"/><circle cx="7.600" cy="11.300" r="1.100" fill="#fff"/>`)}Help</a>
              </div>
            </div>
          </header>
          <nav class="crumbs"><a class="home" href="#home">Sapling Learning</a>${arrow}<a href="#course">CHEM 262 - Organic Chemistry II - Singh</a>${arrow}<a href="#dates">Activities and Due Dates</a>${arrow}<span>Ch 14</span></nav>
          <main class="cols">
            <section class="panel mine">
              <h2 class="title">My Assignment</h2>
              <div class="box"><span class="fold"></span>
                <div class="list">
                  <table class="grades">
                    <thead><tr><th class="c1">#</th><th class="c2">Attempts</th><th>Score</th></tr></thead>
                    <tbody>${ROWS.map((r, i) => html`<tr class=${classMap({ current: i === 3 })}>
                      <th scope="row">${i + 1}</th><td class="att">${r.attempts}</td>
                      <td class="sc"><span class="badge ${r.tone}">${r.score}</span></td></tr>`)}</tbody>
                  </table>
                  <div class="scroll">${chevUp}<div class="thumb"></div>${chevDown}</div>
                </div>
                ${this.module()}
              </div>
            </section>
            <aside class="panel res">
              <h2 class="title">Resources</h2>
              <div class="box"><span class="fold"></span>
                ${this.accordion("Assignment Information", true)}
                <table class="info"><tbody>${INFO.map(([k, v]) => html`<tr><th scope="row">${k}</th><td>${v}</td></tr>`)}</tbody></table>
                <div class="policy">
                  <p>You can check your answers.</p>
                  <p>You can view solutions when you complete or give up on any question.</p>
                  <p>You can keep trying to answer each question until you get it right or give up.</p>
                  <p>You lose 5% of the points available to each answer in your question for each incorrect attempt at that answer.</p>
                </div>
                ${this.accordion("Help With This Topic")}${this.accordion("Web Help & Videos")}${this.accordion("Technical Support and Bug Reports")}
              </div>
            </aside>
          </main>
        </div>
        <div class="scroll page-scroll">${chevUp}<div class="thumb"></div>${chevDown}</div>
      </div>
      <task-bar></task-bar>`;
  }
}
